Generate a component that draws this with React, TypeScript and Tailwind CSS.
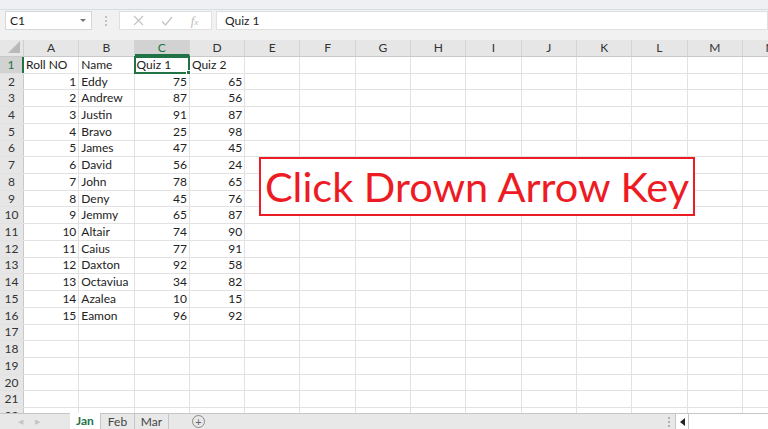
import React from "react"

const rows: (string | number)[][] = [
  ["Roll NO", "Name", "Quiz 1", "Quiz 2"],
  [1, "Eddy", 75, 65],
  [2, "Andrew", 87, 56],
  [3, "Justin", 91, 87],
  [4, "Bravo", 25, 98],
  [5, "James", 47, 45],
  [6, "David", 56, 24],
  [7, "John", 78, 65],
  [8, "Deny", 45, 76],
  [9, "Jemmy", 65, 87],
  [10, "Altair", 74, 90],
  [11, "Caius", 77, 91],
  [12, "Daxton", 92, 58],
  [13, "Octaviua", 34, 82],
  [14, "Azalea", 10, 15],
  [15, "Eamon", 96, 92],
]

const cols = ["A", "B", "C", "D", "E", "F", "G", "H", "I", "J", "K", "L", "M", "N"]

function Cell({ value, selected }: { value?: string | number; selected?: boolean }) {
  const num = typeof value === "number"
  return (
    <div
      className={
        "relative w-[55.3px] shrink-0 h-full border-r border-[#e2e2e2] px-[2px] flex items-center overflow-visible whitespace-nowrap leading-none " +
        (num ? "justify-end" : "justify-start")
      }
    >
      {value}
      {selected && (
        <div className="absolute -left-[1px] -top-[1px] w-[56.3px] h-[17.7px] border-2 border-[#217346]">
          <div className="absolute -right-[3px] -bottom-[3px] w-[5px] h-[5px] bg-[#217346] border border-white" />
        </div>
      )}
    </div>
  )
}

export default function App() {
  const total = 22
  return (
    <div className="relative w-[768px] h-[429px] overflow-hidden bg-white text-[#222] font-['Lato','Open_Sans',sans-serif] text-[12px]">
      {/* title strip */}
      <div className="h-[10px] bg-[#eef0f4] border-b border-[#d8dce4]" />

      {/* formula bar */}
      <div className="h-[30px] bg-[#f1f1f1] flex items-start pt-[1px]">
        <div className="ml-[5px] w-[87px] h-[19px] bg-white border border-[#d6d6d6] flex items-center justify-between pl-[4px] pr-[5px] text-[12px]">
          <span>C1</span>
          <span className="w-0 h-0 border-l-[3px] border-r-[3px] border-t-[3px] border-l-transparent border-r-transparent border-t-[#777]" />
        </div>
        <div className="w-[27px] h-[19px] flex flex-col items-center justify-center gap-[2px]">
          <span className="w-[2px] h-[2px] bg-[#c2c2c2]" />
          <span className="w-[2px] h-[2px] bg-[#c2c2c2]" />
          <span className="w-[2px] h-[2px] bg-[#c2c2c2]" />
        </div>
        <div className="w-[93px] h-[19px] bg-white border border-[#e0e0e0] flex items-center justify-around px-[4px] text-[#c8c8c8]">
          <svg width="11" height="11" viewBox="0 0 11 11" stroke="#c4c4c4" strokeWidth="1.2">
            <path d="M1 1L10 10M10 1L1 10" />
          </svg>
          <svg width="12" height="10" viewBox="0 0 12 10" fill="none" stroke="#c4c4c4" strokeWidth="1.3">
            <path d="M1 5.5L4.5 9L11 1" />
          </svg>
          <span className="font-['Liberation_Serif',serif] italic text-[13px] text-[#bdbdbd]">
            f<span className="text-[9px]">x</span>
          </span>
        </div>
        <div className="ml-[4px] flex-1 h-[19px] bg-white border border-[#e0e0e0] flex items-center pl-[8px] text-[12px]">
          Quiz 1
        </div>
      </div>

      {/* grid */}
      <div className="flex flex-col h-[373px] overflow-hidden">
        <div className="flex h-[17px] shrink-0 bg-[#e6e6e6] border-b border-[#c9c9c9] text-[#333] leading-none">
          <div className="w-[24px] shrink-0 h-full border-r border-[#cfcfcf] relative">
            <svg className="absolute right-[3px] bottom-[3px]" width="12" height="12" viewBox="0 0 12 12">
              <path d="M12 0L12 12L0 12Z" fill="#b9b9b9" />
            </svg>
          </div>
          {cols.map((c) => (
            <div
              key={c}
              className={
                "w-[55.3px] shrink-0 h-full border-r border-[#d4d4d4] flex items-center justify-center " +
                (c === "C" ? "bg-[#d2d2d2] text-[#217346] border-b-2 border-b-[#217346] pt-[2px]" : "")
              }
            >
              {c}
            </div>
          ))}
        </div>

        {Array.from({ length: total }).map((_, i) => {
          const data = rows[i]
          return (
            <div key={i} className="flex h-[16.73px] shrink-0 border-b border-[#e2e2e2]">
              <div
                className={
                  "w-[24px] shrink-0 h-full flex items-center justify-center leading-none " +
                  (i === 0
                    ? "bg-[#d2d2d2] text-[#217346] border-r-2 border-[#217346]"
                    : "bg-[#e6e6e6] text-[#333] border-r border-[#c9c9c9]")
                }
              >
                {i + 1}
              </div>
              {cols.map((c, j) => (
                <Cell key={c} value={data ? data[j] : undefined} selected={i === 0 && j === 2} />
              ))}
            </div>
          )
        })}
      </div>

      {/* sheet tabs */}
      <div className="absolute left-0 right-0 bottom-0 h-[16px] bg-[#e8e8e8] border-t border-[#c6c6c6] flex items-stretch text-[12px] leading-none">
        <div className="w-[70px] flex items-center gap-[12px] pl-[18px] text-[#c4c4c4] text-[7px]">
          <span>◀</span>
          <span>▶</span>
        </div>
        <div className="w-[31px] bg-white -mt-[1px] flex items-center justify-center font-bold text-[#217346] border-r border-[#c6c6c6]">
          Jan
        </div>
        <div className="w-[34px] flex items-center justify-center text-[#444] border-r border-[#c6c6c6]">Feb</div>
        <div className="w-[34px] flex items-center justify-center text-[#444] border-r border-[#c6c6c6]">Mar</div>
        <div className="ml-[23px] flex items-center">
          <div className="w-[13px] h-[13px] rounded-full border border-[#8a8a8a] flex items-center justify-center text-[#666] text-[11px] leading-none">
            +
          </div>
        </div>
        <div className="flex-1" />
        <div className="w-[12px] flex flex-col items-center justify-center gap-[2px]">
          <span className="w-[2px] h-[2px] bg-[#b0b0b0]" />
          <span className="w-[2px] h-[2px] bg-[#b0b0b0]" />
          <span className="w-[2px] h-[2px] bg-[#b0b0b0]" />
        </div>
        <div className="w-[93px] bg-white border-l border-[#c6c6c6] flex items-center">
          <div className="w-[13px] h-full flex items-center justify-center border-r border-[#c6c6c6]">
            <span className="w-0 h-0 border-t-[4px] border-b-[4px] border-r-[5px] border-t-transparent border-b-transparent border-r-[#222]" />
          </div>
        </div>
      </div>

      {/* annotation */}
      <div className="absolute left-[259px] top-[157px] w-[436px] h-[59px] bg-white border-2 border-[#ed1c24] flex items-center justify-center text-[#ed1c24] text-[41.5px] leading-none font-['Lato',sans-serif] whitespace-nowrap">
        Click Drown Arrow Key
      </div>
    </div>
  )
}
